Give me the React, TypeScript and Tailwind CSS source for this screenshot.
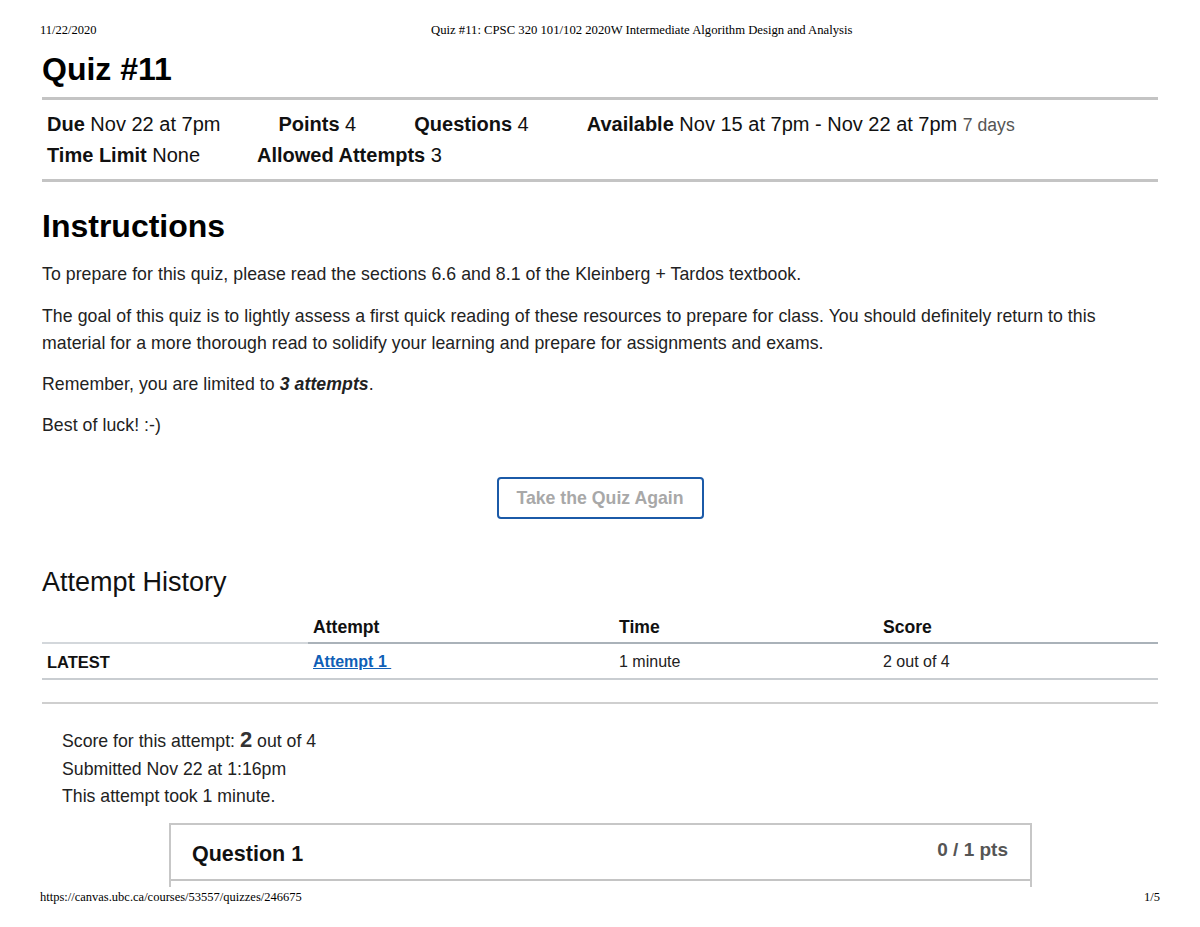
import React from "react";

export default function App() {
  return (
    <div
      className="w-[1200px] h-[927px] bg-white flex flex-col overflow-hidden text-black"
      style={{ fontFamily: '"Liberation Sans", Arial, sans-serif' }}
    >
      <header
        className="flex px-[40px] pt-[23px] text-[12.5px] leading-[14px] text-black"
        style={{ fontFamily: '"Liberation Serif", "Times New Roman", serif' }}
      >
        <span>11/22/2020</span>
        <span className="flex-1 text-center pl-[27px] text-[12.7px]">
          Quiz #11: CPSC 320 101/102 2020W Intermediate Algorithm Design and Analysis
        </span>
      </header>

      <main className="flex-1 overflow-hidden px-[42px]">
        <h1 className="mt-[13px] text-[32px] leading-[38px] font-bold">Quiz #11</h1>
        <div className="mt-[9px] h-[3px] bg-[#c4c4c4]" />

        <div className="py-[9px] pl-[5px] text-[20px] leading-[30px] text-[#111]">
          <div className="flex gap-x-[58px]">
            <span>
              <b>Due</b> Nov 22 at 7pm
            </span>
            <span>
              <b>Points</b> 4
            </span>
            <span>
              <b>Questions</b> 4
            </span>
            <span>
              <b>Available</b> Nov 15 at 7pm - Nov 22 at 7pm{" "}
              <span className="text-[17.6px] text-[#555]">7 days</span>
            </span>
          </div>
          <div className="flex gap-x-[57px]">
            <span>
              <b>Time Limit</b> None
            </span>
            <span>
              <b>Allowed Attempts</b> 3
            </span>
          </div>
        </div>
        <div className="h-[3px] bg-[#c4c4c4]" />

        <h2 className="mt-[25px] text-[32px] leading-[38px] font-bold">Instructions</h2>
        <div className="text-[17.7px] leading-[27px] text-[#222] pr-[14px] tracking-[0.06px]">
          <p className="mt-[16px]">
            To prepare for this quiz, please read the sections 6.6 and 8.1 of the Kleinberg + Tardos textbook.
          </p>
          <p className="mt-[15px]">
            The goal of this quiz is to lightly assess a first quick reading of these resources to prepare for
            class. You should definitely return to this material for a more thorough read to solidify your
            learning and prepare for assignments and exams.
          </p>
          <p className="mt-[14px]">
            Remember, you are limited to{" "}
            <b>
              <i>3 attempts</i>
            </b>
            .
          </p>
          <p className="mt-[14px]">Best of luck! :-)</p>
        </div>

        <div className="mt-[38px] flex justify-center">
          <div className="h-[42px] w-[207px] border-2 border-[#1b5aa8] rounded-[4px] flex items-center justify-center text-[17.7px] font-bold text-[#a8a8a8]">
            Take the Quiz Again
          </div>
        </div>

        <h2 className="mt-[47px] text-[27px] leading-[32px] text-[#111]">Attempt History</h2>

        <div className="mt-[11px] grid grid-cols-[266px_306px_264px_1fr] text-[#111]">
          <div className="pt-[8px] pb-[5px] border-b-2 border-[#d3d7db] h-[35px]" />
          <div className="pt-[8px] pb-[5px] pl-[5px] border-b-2 border-[#aab2b9] text-[17.6px] leading-[20px] font-bold">
            Attempt
          </div>
          <div className="pt-[8px] pb-[5px] pl-[5px] border-b-2 border-[#aab2b9] text-[17.6px] leading-[20px] font-bold">
            Time
          </div>
          <div className="pt-[8px] pb-[5px] pl-[5px] border-b-2 border-[#aab2b9] text-[17.6px] leading-[20px] font-bold">
            Score
          </div>

          <div className="pt-[8px] pb-[6px] pl-[5px] border-b-2 border-[#c9cdd1] text-[16.5px] leading-[20px] font-bold">
            LATEST
          </div>
          <div className="pt-[8px] pb-[6px] pl-[5px] border-b-2 border-[#c9cdd1] text-[16px] leading-[20px] font-bold">
            <span className="text-[#0f5fb7] underline">Attempt 1&nbsp;</span>
          </div>
          <div className="pt-[8px] pb-[6px] pl-[5px] border-b-2 border-[#c9cdd1] text-[16px] leading-[20px] text-[#222]">
            1 minute
          </div>
          <div className="pt-[8px] pb-[6px] pl-[5px] border-b-2 border-[#c9cdd1] text-[16px] leading-[20px] text-[#222]">
            2 out of 4
          </div>

          <div className="col-span-4 h-[24px] border-b-2 border-[#cfcfcf]" />
        </div>

        <div className="mt-[24px] pl-[20px] text-[17.7px] leading-[27.5px] text-[#222]">
          <div className="h-[27.5px]">
            Score for this attempt: <b className="text-[22px] leading-none text-[#333]">2</b> out of 4
          </div>
          <div>Submitted Nov 22 at 1:16pm</div>
          <div>This attempt took 1 minute.</div>
        </div>

        <div className="mt-[12px] ml-[127px] w-[863px] border-2 border-b-0 border-[#c7c7c7] h-[120px]">
          <div className="h-[56px] flex items-center justify-between pl-[21px] pr-[22px] border-b-2 border-[#c4c4c4]">
            <span className="mt-[6px] text-[21.5px] font-bold text-[#111]">Question 1</span>
            <span className="mb-[3px] text-[19px] font-bold text-[#555]">0 / 1 pts</span>
          </div>
        </div>
      </main>

      <footer
        className="h-[40px] flex justify-between px-[40px] pt-[3px] text-[12.5px] leading-[14px] text-black"
        style={{ fontFamily: '"Liberation Serif", "Times New Roman", serif' }}
      >
        <span>https://canvas.ubc.ca/courses/53557/quizzes/246675</span>
        <span>1/5</span>
      </footer>
    </div>
  );
}
